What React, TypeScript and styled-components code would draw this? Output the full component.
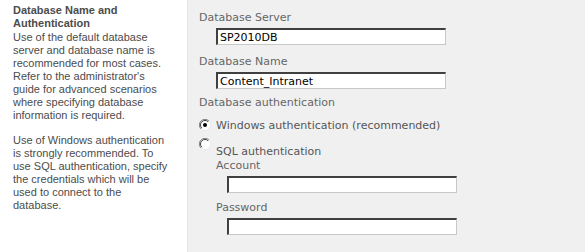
import * as React from "react";
import styled, { createGlobalStyle } from "styled-components";

const GlobalStyle = createGlobalStyle`
  html, body {
    margin: 0;
    padding: 0;
    background: #ffffff;
  }
`;

const SPage = styled.div`
  width: 585px;
  height: 252px;
  display: flex;
  overflow: hidden;
`;

const SDescriptionColumn = styled.div`
  width: 174px;
  padding: 4px 0 0 13px;
  background: #ffffff;
  border-right: 1px solid #e6e6e6;
  font-family: "Liberation Sans", Arial, sans-serif;
  font-size: 11px;
  line-height: 13px;
  color: #4c4c4c;
`;

const STitle = styled.div`
  font-weight: bold;
  color: #4c4c4c;
  margin-bottom: 1px;
`;

const SParagraph = styled.p`
  margin: 0 0 12px 0;
`;

const SFormPanel = styled.div`
  flex: 1;
  background: #f0f0f0;
  padding: 11px 0 0 11px;
  font-family: "DejaVu Sans", Verdana, sans-serif;
  font-size: 11px;
  line-height: 14px;
  color: #666666;
`;

interface ISLabelProps {
  indent?: number;
  top?: number;
}

const SLabel = styled.div<ISLabelProps>`
  margin-left: ${({ indent }) => indent || 0}px;
  margin-top: ${({ top }) => top || 0}px;
`;

const SInput = styled.input<ISLabelProps>`
  display: block;
  box-sizing: border-box;
  width: 230px;
  height: 17px;
  margin: 3px 0 0 ${({ indent }) => indent || 17}px;
  padding: 0 0 0 2px;
  border-top: 2px solid #404040;
  border-left: 2px solid #404040;
  border-right: 1px solid #c8c8c8;
  border-bottom: 1px solid #c8c8c8;
  background: #ffffff;
  font-family: "DejaVu Sans", Verdana, sans-serif;
  font-size: 11px;
  color: #000000;
  outline: none;
`;

const SRadioRow = styled.div<ISLabelProps>`
  display: flex;
  align-items: flex-start;
  margin-top: ${({ top }) => top || 0}px;
  color: #555555;
`;

const SRadioIcon = styled.svg`
  flex: none;
  width: 12px;
  height: 12px;
  margin: 0 5px 0 0;
`;

const SRadioText = styled.span<ISLabelProps>`
  padding-top: ${({ top }) => top || 0}px;
`;

function Radio(props: { checked?: boolean }) {
  return (
    <SRadioIcon viewBox="0 0 12 12">
      <circle cx="6" cy="6" r="5.5" fill="#ffffff" />
      <path d="M10 2 A5.5 5.5 0 0 0 2 10" fill="none" stroke="#808080" strokeWidth="1" />
      <path d="M9.2 2.8 A4.5 4.5 0 0 0 2.8 9.2" fill="none" stroke="#404040" strokeWidth="1" />
      <path d="M2 10 A5.5 5.5 0 0 0 10 2" fill="none" stroke="#e8e8e8" strokeWidth="1" />
      {props.checked && <circle cx="6" cy="6" r="2" fill="#000000" />}
    </SRadioIcon>
  );
}

export default function App() {
  return (
    <>
      <GlobalStyle />
      <SPage>
        <SDescriptionColumn>
          <STitle>
            Database Name and
            <br />
            Authentication
          </STitle>
          <SParagraph>
            Use of the default database
            <br />
            server and database name is
            <br />
            recommended for most cases.
            <br />
            Refer to the administrator's
            <br />
            guide for advanced scenarios
            <br />
            where specifying database
            <br />
            information is required.
          </SParagraph>
          <SParagraph>
            Use of Windows authentication
            <br />
            is strongly recommended. To
            <br />
            use SQL authentication, specify
            <br />
            the credentials which will be
            <br />
            used to connect to the
            <br />
            database.
          </SParagraph>
        </SDescriptionColumn>
        <SFormPanel>
          <SLabel>Database Server</SLabel>
          <SInput defaultValue="SP2010DB" />
          <SLabel top={10}>Database Name</SLabel>
          <SInput defaultValue="Content_Intranet" />
          <SLabel top={7}>Database authentication</SLabel>
          <SRadioRow top={9}>
            <Radio checked />
            <SRadioText>Windows authentication (recommended)</SRadioText>
          </SRadioRow>
          <SRadioRow top={5}>
            <Radio />
            <SRadioText top={7}>SQL authentication</SRadioText>
          </SRadioRow>
          <SLabel indent={17}>Account</SLabel>
          <SInput indent={28} defaultValue="" />
          <SLabel indent={17} top={8}>Password</SLabel>
          <SInput indent={28} type="password" defaultValue="" />
        </SFormPanel>
      </SPage>
    </>
  );
}
